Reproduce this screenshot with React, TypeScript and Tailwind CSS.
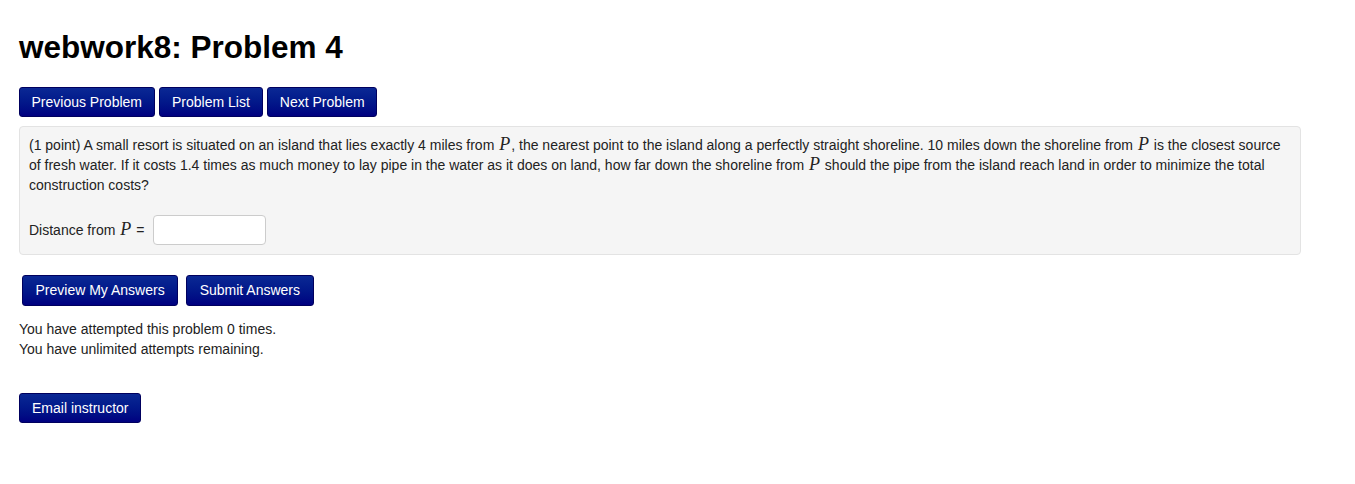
import React from 'react';

const font = { fontFamily: '"Liberation Sans", Arial, sans-serif' };

function NavyButton({ label, className = '' }: { label: string; className?: string }) {
  return (
    <button
      type="button"
      className={
        'inline-flex h-[30px] items-center rounded-[3px] border border-[#00005e] bg-gradient-to-b from-[#0b2894] to-[#000080] text-[14px] leading-[19px] text-white ' +
        className
      }
    >
      {label}
    </button>
  );
}

function MathP() {
  return (
    <span className="mx-[1px] text-[18px] italic leading-[16px]" style={{ fontFamily: '"Liberation Serif", "Times New Roman", serif' }}>
      P
    </span>
  );
}

export default function App() {
  return (
    <div className="min-h-screen bg-white px-[19px] pt-[30px] text-[14px] leading-[20px] text-[#222]" style={font}>
      <h1 className="text-[31.5px] font-bold leading-[35px] text-black">webwork8: Problem 4</h1>

      <div className="mt-[22px] flex gap-[4px]">
        <NavyButton label="Previous Problem" className="px-[11.5px]" />
        <NavyButton label="Problem List" className="px-[12.5px]" />
        <NavyButton label="Next Problem" className="px-[11.5px]" />
      </div>

      <div className="mt-[9px] w-[1282px] rounded-[4px] border border-[#e3e3e3] bg-[#f5f5f5] px-[9px] pb-[9px] pt-[8px]">
        <p>
          (1 point) A small resort is situated on an island that lies exactly 4 miles from <MathP />, the nearest point to the
          island along a perfectly straight shoreline. 10 miles down the shoreline from <MathP /> is the closest source of fresh
          water. If it costs 1.4 times as much money to lay pipe in the water as it does on land, how far down the shoreline from{' '}
          <MathP /> should the pipe from the island reach land in order to minimize the total construction costs?
        </p>
        <div className="mt-[20px] flex items-center">
          <span>
            Distance from <MathP /> =
          </span>
          <input
            type="text"
            className="ml-[9px] h-[30px] w-[113px] rounded-[4px] border border-[#cccccc] bg-white px-2 outline-none"
          />
        </div>
      </div>

      <div className="ml-[3px] mt-[20px] flex gap-[8px]">
        <NavyButton label="Preview My Answers" className="h-[31px] px-[12.5px]" />
        <NavyButton label="Submit Answers" className="h-[31px] px-[12.5px]" />
      </div>

      <div className="mt-[13px]">
        <div>You have attempted this problem 0 times.</div>
        <div>You have unlimited attempts remaining.</div>
      </div>

      <div className="mt-[34px]">
        <NavyButton label="Email instructor" className="px-[12px]" />
      </div>
    </div>
  );
}
